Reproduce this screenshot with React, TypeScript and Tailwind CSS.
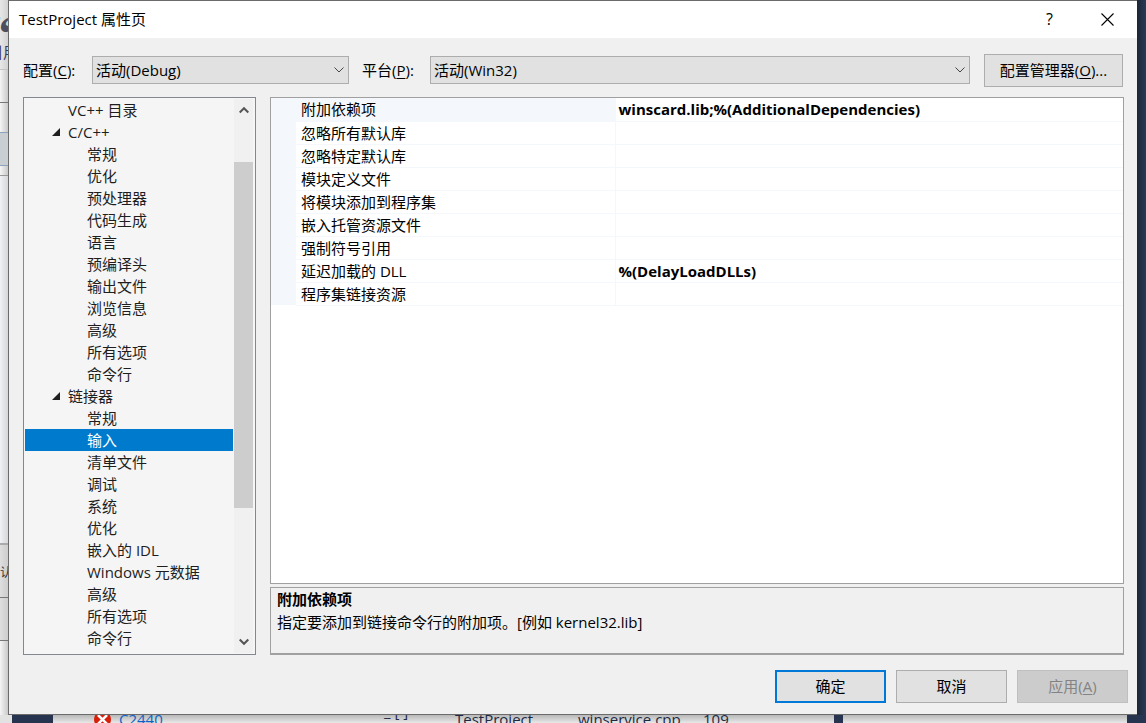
import { useState } from "react";
import { clsx } from "clsx";

const TREE = [
  { id: "vc", label: "VC++ 目录", level: 0 },
  { id: "cpp", label: "C/C++", level: 0, open: true },
  { id: "cpp-general", label: "常规", level: 1 },
  { id: "cpp-optimize", label: "优化", level: 1 },
  { id: "cpp-pre", label: "预处理器", level: 1 },
  { id: "cpp-codegen", label: "代码生成", level: 1 },
  { id: "cpp-lang", label: "语言", level: 1 },
  { id: "cpp-pch", label: "预编译头", level: 1 },
  { id: "cpp-output", label: "输出文件", level: 1 },
  { id: "cpp-browse", label: "浏览信息", level: 1 },
  { id: "cpp-advanced", label: "高级", level: 1 },
  { id: "cpp-all", label: "所有选项", level: 1 },
  { id: "cpp-cmd", label: "命令行", level: 1 },
  { id: "link", label: "链接器", level: 0, open: true },
  { id: "link-general", label: "常规", level: 1 },
  { id: "link-input", label: "输入", level: 1 },
  { id: "link-manifest", label: "清单文件", level: 1 },
  { id: "link-debug", label: "调试", level: 1 },
  { id: "link-system", label: "系统", level: 1 },
  { id: "link-optimize", label: "优化", level: 1 },
  { id: "link-idl", label: "嵌入的 IDL", level: 1 },
  { id: "link-winmd", label: "Windows 元数据", level: 1 },
  { id: "link-advanced", label: "高级", level: 1 },
  { id: "link-all", label: "所有选项", level: 1 },
  { id: "link-cmd", label: "命令行", level: 1 },
];

const PROPERTIES = [
  { name: "附加依赖项", value: "winscard.lib;%(AdditionalDependencies)" },
  { name: "忽略所有默认库", value: "" },
  { name: "忽略特定默认库", value: "" },
  { name: "模块定义文件", value: "" },
  { name: "将模块添加到程序集", value: "" },
  { name: "嵌入托管资源文件", value: "" },
  { name: "强制符号引用", value: "" },
  { name: "延迟加载的 DLL", value: "%(DelayLoadDLLs)" },
  { name: "程序集链接资源", value: "" },
];

function AccessKey({ children }: { children: string }) {
  return <span className="underline underline-offset-2">{children}</span>;
}

function Dropdown({ id, value }: { id: string; value: string }) {
  return (
    <div className="relative w-full">
      <select
        id={id}
        className="block h-7 w-full appearance-none border border-[#adadad] bg-[#e1e1e1] pb-px pl-[3px] pr-6 text-black outline-none"
      >
        <option>{value}</option>
      </select>
      <svg
        className="pointer-events-none absolute right-1 top-[10px] h-2 w-3"
        viewBox="0 0 12 8"
        fill="none"
        stroke="#444"
      >
        <path d="M1.5 1.5 6 6l4.5-4.5" />
      </svg>
    </div>
  );
}

function TitleBar() {
  return (
    <header className="flex h-[37px] items-center bg-white pl-[10px]">
      <h1 className="flex-1 pb-px">TestProject 属性页</h1>
      <button aria-label="帮助" className="h-full w-[57px] pb-px text-base">
        ?
      </button>
      <button aria-label="关闭" className="flex h-full w-[59px] items-center justify-center">
        <svg className="size-[13px]" viewBox="0 0 13 13" fill="none" stroke="#000" strokeWidth="1.1">
          <path d="M.5.5l12 12M12.5.5l-12 12" />
        </svg>
      </button>
    </header>
  );
}

function ScrollBar() {
  return (
    <div className="flex w-[19px] flex-col items-center bg-[#f0f0f0]">
      <svg className="my-[7px] h-[8px] w-[10px]" viewBox="0 0 10 8" fill="none" stroke="#555" strokeWidth="2">
        <path d="M.7 6.5 5 2.2l4.3 4.3" />
      </svg>
      <div className="mt-[41px] h-[346px] w-full bg-[#cdcdcd]" />
      <svg className="mb-[7px] mt-auto h-[8px] w-[10px]" viewBox="0 0 10 8" fill="none" stroke="#555" strokeWidth="2">
        <path d="M.7 1.5 5 5.8l4.3-4.3" />
      </svg>
    </div>
  );
}

function CategoryTree() {
  const [selected, setSelected] = useState("link-input");

  return (
    <nav className="flex w-[233px] shrink-0 border border-[#828790] bg-[#f5f5f5] py-px pl-px pr-[2px]">
      <ul className="mr-px flex-1">
        {TREE.map((item) => (
          <li key={item.id}>
            <button
              onClick={() => setSelected(item.id)}
              className={clsx(
                "flex h-[22px] w-full items-center text-left leading-[22px]",
                item.level === 0 ? "pl-[27px]" : "pl-[62px]",
                selected === item.id ? "bg-[#007acc] text-white" : "text-[#1e1e1e]"
              )}
            >
              {item.level === 0 && (
                <svg className="mr-2 size-2" viewBox="0 0 8 8" fill="#1e1e1e">
                  {item.open && <path d="M8 0v8H0z" />}
                </svg>
              )}
              {item.label}
            </button>
          </li>
        ))}
      </ul>
      <ScrollBar />
    </nav>
  );
}

function PropertyGrid() {
  return (
    <div className="flex-1 border border-[#a0a0a0] bg-white">
      <table className="w-full table-fixed border-collapse">
        <colgroup>
          <col className="w-[25px]" />
          <col className="w-[319px]" />
          <col />
        </colgroup>
        <tbody>
          {PROPERTIES.map((property, i) => (
            <tr key={property.name} className="h-[23px]">
              <td className="bg-[#f4f7fc] p-0" />
              <th
                scope="row"
                className={clsx(
                  "border-b border-r border-[#f4f7fc] p-0 pl-[5px] text-left font-normal leading-[22px]",
                  i === 0 && "bg-[#f4f7fc]"
                )}
              >
                {property.name}
              </th>
              <td className="border-b border-[#f4f7fc] p-0 pl-[3px] font-bold leading-[22px]">
                {property.value}
              </td>
            </tr>
          ))}
        </tbody>
      </table>
    </div>
  );
}

function Description() {
  return (
    <section className="h-[68px] border border-b-2 border-[#a0a0a0] px-[6px]">
      <h2 className="font-bold leading-[22px]">附加依赖项</h2>
      <p className="leading-6">指定要添加到链接命令行的附加项。[例如 kernel32.lib]</p>
    </section>
  );
}

// Editor window edge that stays visible left of the dialog
function EditorEdge() {
  return (
    <div className="flex w-2 shrink-0 flex-col overflow-hidden whitespace-nowrap bg-gradient-to-r from-[#f6f6f6] to-[#c9c9c9]">
      <div className="h-[70px] border-b border-[#c4c4c4] bg-[#d9d9d9]/50 pt-[14px]">
        <div className="-ml-3 h-7 font-['Liberation_Serif',serif] text-5xl font-bold leading-10 text-[#4b4f60]">“</div>
        <div className="-ml-3 text-[#3b3660]">引用</div>
      </div>
      <div className="h-[33px] border-b border-[#777]" />
      <div className="h-[29px]" />
      <div className="h-[34px] border-y border-[#8ba3bd] bg-[#c9ced3]" />
      <div className="h-[10px] border-b border-[#999]" />
      <div className="h-[367px] bg-[#e6ebf5]/40" />
      <div className="h-[54px] border-t-2 border-[#aaa] bg-[#cfcfcf]/60 pt-5 text-xs text-[#333]">认</div>
      <div className="h-[44px] border-y border-[#777] bg-[#cfcfcf]/60" />
    </div>
  );
}

// Top slice of the error list under the dialog
function ErrorListEdge() {
  return (
    <div className="flex h-2 overflow-hidden bg-[#26344f]">
      <div className="w-3 shrink-0 bg-[#e2e2e2]" />
      <div className="ml-[41px] flex w-[781px] shrink-0 items-center whitespace-nowrap bg-gradient-to-b from-[#b8b8b8] to-[#e8e8e8] text-[#1e2a44]">
        <svg className="ml-[41px] size-[17px] shrink-0" viewBox="0 0 17 17">
          <circle cx="8.5" cy="8.5" r="8.5" fill="#d6200c" />
          <path d="M4 4l9 9M13 4l-9 9" stroke="#fff" strokeWidth="2.5" />
        </svg>
        <a href="#c2440" className="ml-2 w-[265px] text-[#0e62c4]">C2440</a>
        <span className="w-[71px] pb-4">_ [ ]</span>
        <span className="w-[123px]">TestProject</span>
        <span className="w-[125px]">winservice.cpp</span>
        <span>109</span>
      </div>
      <div className="ml-[9px] mr-[19px] flex-1 bg-gradient-to-b from-[#b8b8b8] to-[#e8e8e8]" />
    </div>
  );
}

export default function App() {
  return (
    <div className="flex min-h-screen flex-col font-['Open_Sans','Noto_Sans_CJK_SC',sans-serif] text-[15px] leading-5 text-black">
      <div className="flex flex-1">
        <EditorEdge />
        <main className="flex min-w-0 flex-1 flex-col border-y border-l border-[#6b6b6b] bg-[#f0f0f0]">
          <TitleBar />
          <div className="flex h-[59px] items-center px-[14px] pt-[5px]">
            <label htmlFor="config" className="w-[69px] shrink-0 pb-px">
              配置(<AccessKey>C</AccessKey>):
            </label>
            <div className="w-[257px] shrink-0">
              <Dropdown id="config" value="活动(Debug)" />
            </div>
            <label htmlFor="platform" className="ml-[13px] w-[68px] shrink-0 pb-px">
              平台(<AccessKey>P</AccessKey>):
            </label>
            <Dropdown id="platform" value="活动(Win32)" />
            <button className="ml-[14px] h-[33px] w-[139px] shrink-0 border border-[#adadad] bg-[#e1e1e1] pb-px">
              配置管理器(<AccessKey>O</AccessKey>)...
            </button>
          </div>
          <div className="flex flex-1 gap-[14px] pl-[14px] pr-[13px]">
            <CategoryTree />
            <div className="flex min-w-0 flex-1 flex-col gap-[3px]">
              <PropertyGrid />
              <Description />
            </div>
          </div>
          <footer className="flex justify-end gap-[10px] pb-[11px] pr-[9px] pt-[15px]">
            <button className="h-[33px] w-[111px] border-2 border-[#0078d7] bg-[#e1e1e1] pb-px">确定</button>
            <button className="h-[33px] w-[111px] border border-[#adadad] bg-[#e1e1e1] pb-px">取消</button>
            <button disabled className="h-[33px] w-[111px] border border-[#bfbfbf] bg-[#cccccc] pb-px text-[#838383]">
              应用(<AccessKey>A</AccessKey>)
            </button>
          </footer>
        </main>
        <div className="w-[9px] shrink-0 bg-gradient-to-r from-[#1c2638] to-[#293955]" />
      </div>
      <ErrorListEdge />
    </div>
  );
}
